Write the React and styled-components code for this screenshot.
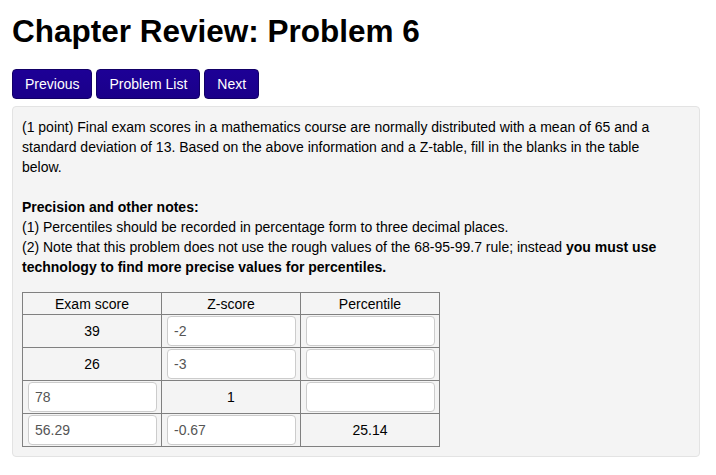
import styled, { createGlobalStyle } from "styled-components";

const GlobalStyle = createGlobalStyle`
  body {
    margin: 0;
    background: #fff;
    font-family: "Liberation Sans", Arial, sans-serif;
    color: #000;
  }
`;

const rows = [
  [{ text: "39" }, { input: "-2" }, { input: "" }],
  [{ text: "26" }, { input: "-3" }, { input: "" }],
  [{ input: "78" }, { text: "1" }, { input: "" }],
  [{ input: "56.29" }, { input: "-0.67" }, { text: "25.14" }],
];

export default function App() {
  return (
    <Page>
      <GlobalStyle />
      <Title>Chapter Review: Problem 6</Title>
      <Nav>
        <NavButton>Previous</NavButton>
        <NavButton>Problem List</NavButton>
        <NavButton>Next</NavButton>
      </Nav>
      <Well>
        <Para>
          (1 point) Final exam scores in a mathematics course are normally
          distributed with a mean of 65 and a standard deviation of 13. Based
          on the above information and a Z-table, fill in the blanks in the
          table below.
        </Para>
        <Para>
          <b>Precision and other notes:</b>
          <br />
          (1) Percentiles should be recorded in percentage form to three
          decimal places.
          <br />
          (2) Note that this problem does not use the rough values of the
          68-95-99.7 rule; instead{" "}
          <b>you must use technology to find more precise values for percentiles.</b>
        </Para>
        <Table>
          <thead>
            <tr>
              <Th>Exam score</Th>
              <Th>Z-score</Th>
              <Th>Percentile</Th>
            </tr>
          </thead>
          <tbody>
            {rows.map((row, i) => (
              <tr key={i}>
                {row.map((cell, j) => (
                  <Td key={j} $input={cell.input !== undefined}>
                    {cell.input !== undefined ? (
                      <Answer type="text" defaultValue={cell.input} />
                    ) : (
                      cell.text
                    )}
                  </Td>
                ))}
              </tr>
            ))}
          </tbody>
        </Table>
      </Well>
    </Page>
  );
}

const Page = styled.main`
  padding: 0 16px 0 12px;
`;

const Title = styled.h1`
  margin: 0;
  padding-top: 13px;
  font-size: 31.5px;
  line-height: 36px;
  font-weight: bold;
`;

const Nav = styled.div`
  display: flex;
  gap: 4px;
  margin-top: 20px;
`;

const NavButton = styled.button`
  height: 30px;
  padding: 0 12px;
  border: 1px solid #120066;
  border-radius: 4px;
  background: linear-gradient(#1d0096, #1a0089);
  color: #fff;
  font-family: "Liberation Sans", Arial, sans-serif;
  font-size: 14px;
  cursor: pointer;
`;

const Well = styled.div`
  margin-top: 7px;
  padding: 10px 20px 9px 9px;
  background: #f4f4f4;
  border: 1px solid #e3e3e3;
  border-radius: 4px;
`;

const Para = styled.p`
  margin: 0 0 20px 0;
  font-size: 14px;
  line-height: 20px;
  &:last-of-type {
    margin-bottom: 15px;
  }
`;

const Table = styled.table`
  border-collapse: collapse;
  font-size: 14px;
`;

const Th = styled.th`
  box-sizing: border-box;
  width: 139px;
  height: 22px;
  padding: 0;
  border: 1px solid #808080;
  font-weight: normal;
  text-align: center;
`;

const Td = styled.td`
  box-sizing: border-box;
  width: 139px;
  height: 33px;
  padding: ${(p) => (p.$input ? "1px 4px 1px 5px" : "0")};
  border: 1px solid #808080;
  text-align: center;
`;

const Answer = styled.input`
  display: block;
  box-sizing: border-box;
  width: 129px;
  height: 30px;
  padding: 0 6px;
  border: 1px solid #cccccc;
  border-radius: 4px;
  background: #fff;
  color: #555;
  font-family: "Liberation Sans", Arial, sans-serif;
  font-size: 14px;
`;
